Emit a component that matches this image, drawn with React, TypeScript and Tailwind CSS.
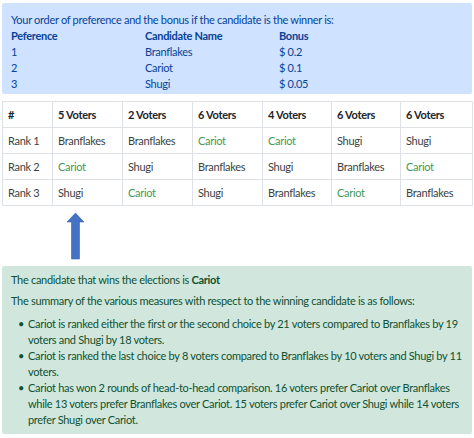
import React from "react";

const cols = ["5 Voters", "2 Voters", "6 Voters", "4 Voters", "6 Voters", "6 Voters"];
const rows: string[][] = [
  ["Branflakes", "Branflakes", "Cariot", "Cariot", "Shugi", "Shugi"],
  ["Cariot", "Shugi", "Branflakes", "Shugi", "Branflakes", "Cariot"],
  ["Shugi", "Cariot", "Shugi", "Branflakes", "Cariot", "Branflakes"],
];

const items = [
  "Cariot is ranked either the first or the second choice by 21 voters compared to Branflakes by 19 voters and Shugi by 18 voters.",
  "Cariot is ranked the last choice by 8 voters compared to Branflakes by 10 voters and Shugi by 11 voters.",
  "Cariot has won 2 rounds of head-to-head comparison. 16 voters prefer Cariot over Branflakes while 13 voters prefer Branflakes over Cariot. 15 voters prefer Cariot over Shugi while 14 voters prefer Shugi over Cariot.",
];

export default function App() {
  return (
    <div
      className="w-[474px] h-[438px] bg-white text-[11px] leading-[16px] tracking-[-0.3px] text-[#212529] pt-[3px] px-[2px]"
      style={{ fontFamily: 'Lato, "Noto Sans", sans-serif' }}
    >
      <div className="bg-[#cfe2ff] text-[#084298] rounded-[2px] pl-[9px] pt-[9px] h-[91px]">
        <div>Your order of preference and the bonus if the candidate is the winner is:</div>
        <div className="grid grid-cols-[134px_134px_134px]">
          <div className="font-bold">Peference</div>
          <div className="font-bold">Candidate Name</div>
          <div className="font-bold">Bonus</div>
          <div>1</div>
          <div>Branflakes</div>
          <div>$ 0.2</div>
          <div>2</div>
          <div>Cariot</div>
          <div>$ 0.1</div>
          <div>3</div>
          <div>Shugi</div>
          <div>$ 0.05</div>
        </div>
      </div>

      <table className="mt-[7px] w-[470px] border-collapse table-fixed">
        <colgroup>
          <col className="w-[50px]" />
          <col className="w-[70px]" />
          <col className="w-[70px]" />
          <col className="w-[70px]" />
          <col className="w-[69px]" />
          <col className="w-[69px]" />
          <col className="w-[72px]" />
        </colgroup>
        <thead>
          <tr className="h-[26px]">
            <th className="border border-[#dee2e6] text-left font-bold pl-[5px] pr-0">#</th>
            {cols.map((c, i) => (
              <th key={i} className="border border-[#dee2e6] text-left font-bold pl-[5px] pr-0 whitespace-nowrap">
                {c}
              </th>
            ))}
          </tr>
        </thead>
        <tbody>
          {rows.map((r, ri) => (
            <tr key={ri} className="h-[26px]">
              <td className="border border-[#dee2e6] pl-[5px] pr-0 whitespace-nowrap text-[#3a3f44]">Rank {ri + 1}</td>
              {r.map((c, ci) => (
                <td
                  key={ci}
                  className={
                    c === "Cariot"
                      ? "border border-[#dee2e6] pl-[5px] pr-0 text-[#3f9a55] whitespace-nowrap"
                      : "border border-[#dee2e6] pl-[5px] pr-0 whitespace-nowrap text-[#3a3f44]"
                  }
                >
                  {c}
                </td>
              ))}
            </tr>
          ))}
        </tbody>
      </table>

      <div className="h-[60px] pl-[65px] pt-[7px]">
        <svg className="block" width="17" height="47" viewBox="0 0 17 47">
          <polygon points="8.5,0 17,9 12.5,9 12.5,46 4.5,46 4.5,9 0,9" fill="#4472c4" stroke="#3a63ad" strokeWidth="0.6" />
        </svg>
      </div>

      <div className="bg-[#d1e7dd] text-[#0f5132] rounded-[2px] pl-[9px] pr-[10px] pt-[6px] h-[168px]">
        <div className="mb-[5px]">
          The candidate that wins the elections is <span className="font-bold">Cariot</span>
        </div>
        <div className="mb-[7px]">The summary of the various measures with respect to the winning candidate is as follows:</div>
        <ul>
          {items.map((t, i) => (
            <li key={i} className="flex">
              <span className="w-[17px] shrink-0 pl-[7px]">•</span>
              <span>{t}</span>
            </li>
          ))}
        </ul>
      </div>
    </div>
  );
}
